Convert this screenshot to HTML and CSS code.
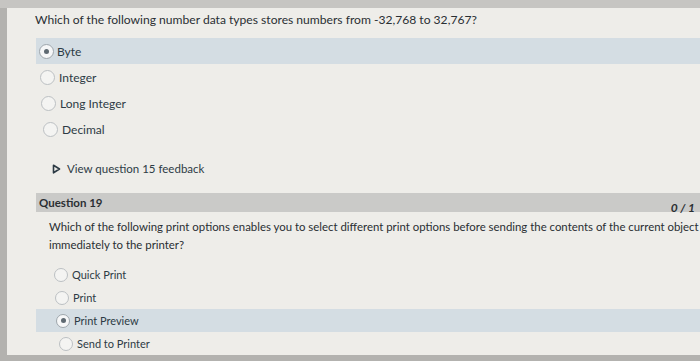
FILE: index.html
```html
<!DOCTYPE html>
<html>
<head>
<meta charset="utf-8">
<link rel="stylesheet" href="styles.css">
</head>
<body>
<div class="frame">
  <div class="page">
    <section class="q q1">
      <p class="qtext">Which of the following number data types stores numbers from -32,768 to 32,767?</p>
      <ul class="answers">
        <li class="ans selected a1"><span class="radio on"></span>Byte</li>
        <li class="ans a2"><span class="radio"></span>Integer</li>
        <li class="ans a3"><span class="radio"></span>Long Integer</li>
        <li class="ans a4"><span class="radio"></span>Decimal</li>
      </ul>
      <div class="feedback"><svg class="tri" width="9" height="10" viewBox="0 0 9 10"><path d="M1.5 1.2 L7.5 5 L1.5 8.8 Z" fill="none" stroke="#2d3b45" stroke-width="1.6" stroke-linejoin="round"/></svg>View question 15 feedback</div>
    </section>
    <section class="q q2">
      <div class="qhead"><span class="qtitle">Question 19</span><span class="score">0 / 1</span></div>
      <p class="qtext2">Which of the following print options enables you to select different print options before sending the contents of the current object immediately to the printer?</p>
      <ul class="answers answers2">
        <li class="ans b1"><span class="radio"></span>Quick Print</li>
        <li class="ans b2"><span class="radio"></span>Print</li>
        <li class="ans selected b3"><span class="radio on"></span>Print Preview</li>
        <li class="ans b4"><span class="radio"></span>Send to Printer</li>
      </ul>
    </section>
  </div>
</div>
</body>
</html>
```
FILE: styles.css
```css
html, body {
  margin: 0;
  padding: 0;
  width: 700px;
  height: 361px;
  overflow: hidden;
  background: #b3b2af;
}
.frame {
  width: 700px;
  height: 361px;
  box-sizing: border-box;
  padding: 8px 0 6px 7px;
  background: linear-gradient(#c6c5c2 0 8px, #b3b2af 8px);
}
.page {
  height: 100%;
  background: #eeede9;
  font-family: Lato, "Open Sans", sans-serif;
  color: #2d3b45;
  overflow: hidden;
}
.q1 {
  padding: 4px 0 0 28px;
}
.qtext {
  margin: 0;
  font-size: 12.1px;
  line-height: 16px;
  color: #2a2f33;
}
.answers {
  list-style: none;
  margin: 10px 0 0 0;
  padding: 0;
}
.ans {
  display: flex;
  align-items: center;
  font-size: 12px;
  height: 26px;
  color: #2d3b45;
}
.radio {
  width: 15px;
  height: 15px;
  border-radius: 50%;
  border: 1px solid #bcc0c3;
  background: #f4f4f2;
  box-sizing: border-box;
  margin-right: 4px;
  position: relative;
  flex: none;
}
.radio.on {
  border: 1.5px solid #9ea6ac;
  background: #f6f7f8;
}
.radio.on::after {
  content: "";
  position: absolute;
  left: 50%;
  top: 50%;
  width: 5px;
  height: 5px;
  margin: -2.5px 0 0 -2.5px;
  border-radius: 50%;
  background: #5f6a72;
}
.selected {
  background: #d4dde3;
  margin-left: 1px;
}
.a1 { padding-left: 3px; }
.a1 .radio { margin-right: 3px; }
.a2 { padding-left: 5px; }
.a3 { padding-left: 6px; }
.a4 { padding-left: 8px; }
.feedback {
  display: flex;
  align-items: center;
  margin: 20px 0 0 17px;
  font-size: 11.5px;
  color: #2d3b45;
}
.tri {
  margin-right: 6px;
}
.q2 {
  margin-top: 18px;
  padding-left: 29px;
}
.qhead {
  display: flex;
  justify-content: space-between;
  align-items: center;
  height: 19px;
  background: #cacac8;
  padding: 0 0 0 3px;
  font-size: 11.5px;
  font-weight: 700;
  color: #2a2f33;
}
.score {
  font-style: italic;
  font-size: 12px;
  margin-right: 5px;
  padding-top: 10px;
}
.qtext2 {
  margin: 6px 0 0 13px;
  font-size: 11.4px;
  line-height: 18px;
  color: #2a2f33;
  width: 690px;
}
.answers2 {
  margin: 9px 0 0 0;
}
.answers2 .ans {
  font-size: 11px;
  height: 23px;
}
.answers2 .radio {
  width: 14px;
  height: 14px;
}
.b1 { padding-left: 18px; }
.b2 { padding-left: 19px; }
.b3 { padding-left: 20px; margin-left: 0; }
.b4 { padding-left: 23px; }
```
